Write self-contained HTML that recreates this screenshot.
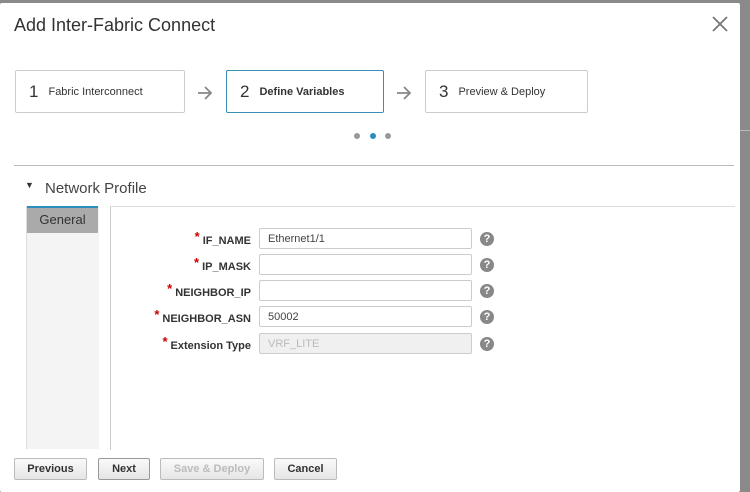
<!DOCTYPE html>
<html><head><style>
body{margin:0;width:750px;height:492px;background:#8a8a8a;font-family:"Liberation Sans",Arial,sans-serif;position:relative;overflow:hidden}
.abs{position:absolute}
.dlg{left:0;top:3px;width:740px;height:489px;background:#fff;border-radius:2px}
.step{height:43px;border:1px solid #ccc;border-radius:2px;background:#fff;box-sizing:border-box;display:flex;align-items:center;font-size:11px;color:#333}
.step b{font-weight:normal;font-size:17px;margin:0 10px 0 13px}
.lbl{width:240px;text-align:right;font-size:11px;font-weight:bold;color:#333;left:11px}
.lbl i{color:#c00;font-style:normal;font-size:13px;margin-right:3px;position:relative;top:-3px}
.inp{left:259px;width:213px;height:21px;border:1px solid #ccc;border-radius:2px;box-sizing:border-box;font-size:11px;color:#444;padding:4px 8px}
.q{left:480px;width:14px;height:14px;border-radius:50%;background:#888;color:#fff;font-size:11px;font-weight:bold;text-align:center;line-height:14px}
.btn{top:458px;height:22px;border:1px solid #bbb;border-radius:2px;background:linear-gradient(#fafafa,#e6e6e6);box-sizing:border-box;font-size:11px;font-weight:bold;color:#333;text-align:center;line-height:20px}
</style></head><body>
<div class="abs" style="left:740px;top:130px;width:10px;height:1px;background:#bbb"></div>
<div class="abs dlg"></div>
<div class="abs" style="left:14px;top:15px;font-size:18px;color:#333">Add Inter-Fabric Connect</div>
<svg class="abs" style="left:712px;top:16px" width="16" height="16"><path d="M1 1L15 15M15 1L1 15" stroke="#777" stroke-width="1.8"/></svg>
<div class="abs step" style="left:15px;top:70px;width:170px"><b>1</b>Fabric Interconnect</div>
<svg class="abs" style="left:197px;top:86px" width="16" height="14"><path d="M1 7H14M8 1L14 7L8 13" stroke="#888" stroke-width="1.8" fill="none"/></svg>
<div class="abs step" style="left:226px;top:70px;width:158px;border-color:#3a8fb7"><b>2</b><span style="font-weight:bold">Define Variables</span></div>
<svg class="abs" style="left:396px;top:86px" width="16" height="14"><path d="M1 7H14M8 1L14 7L8 13" stroke="#888" stroke-width="1.8" fill="none"/></svg>
<div class="abs step" style="left:425px;top:70px;width:163px"><b>3</b>Preview &amp; Deploy</div>
<div class="abs" style="left:354px;top:133px;width:6px;height:6px;border-radius:50%;background:#999"></div>
<div class="abs" style="left:370px;top:133px;width:6px;height:6px;border-radius:50%;background:#2a8fbd"></div>
<div class="abs" style="left:385px;top:133px;width:6px;height:6px;border-radius:50%;background:#999"></div>
<div class="abs" style="left:14px;top:165px;width:720px;height:1px;background:#bbb"></div>
<div class="abs" style="left:25px;top:180px;font-size:9px;color:#333">▼</div>
<div class="abs" style="left:45px;top:180px;font-size:15px;color:#444">Network Profile</div>
<div class="abs" style="left:26px;top:206px;width:72px;height:243px;background:#f4f4f4;border-left:1px solid #ddd"></div>
<div class="abs" style="left:27px;top:206px;width:71px;height:27px;background:#aaa;border-top:2px solid #2a8fbd;box-sizing:border-box;font-size:13px;color:#333;text-align:center;line-height:24px">General</div>
<div class="abs" style="left:110px;top:206px;width:624px;height:243px;border-left:1px solid #ccc;border-top:1px solid #ddd"></div>
<div class="abs lbl" style="top:232px"><i>*</i>IF_NAME</div>
<div class="abs inp" style="top:228px">Ethernet1/1</div><div class="abs q" style="top:232px;left:480px">?</div>
<div class="abs lbl" style="top:258px"><i>*</i>IP_MASK</div>
<div class="abs inp" style="top:254px"></div><div class="abs q" style="top:258px">?</div>
<div class="abs lbl" style="top:284px"><i>*</i>NEIGHBOR_IP</div>
<div class="abs inp" style="top:280px"></div><div class="abs q" style="top:284px">?</div>
<div class="abs lbl" style="top:310px"><i>*</i>NEIGHBOR_ASN</div>
<div class="abs inp" style="top:306px">50002</div><div class="abs q" style="top:310px">?</div>
<div class="abs lbl" style="top:337px"><i>*</i>Extension Type</div>
<div class="abs inp" style="top:333px;background:#f0f0f0;color:#bbb">VRF_LITE</div><div class="abs q" style="top:337px">?</div>
<div class="abs btn" style="left:14px;width:73px">Previous</div>
<div class="abs btn" style="left:98px;width:52px;border-color:#999">Next</div>
<div class="abs btn" style="left:160px;width:104px;color:#bbb">Save &amp; Deploy</div>
<div class="abs btn" style="left:274px;width:63px">Cancel</div>
</body></html>
